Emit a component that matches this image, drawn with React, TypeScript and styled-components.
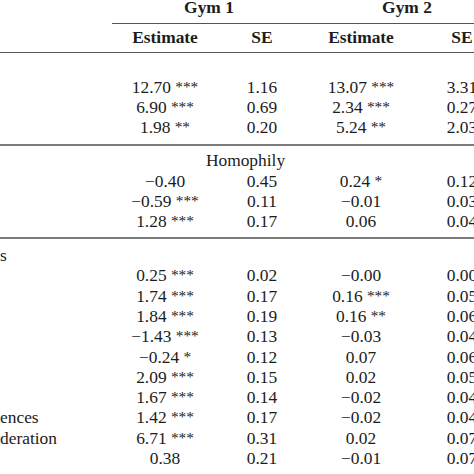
import React from 'react'
import styled, { createGlobalStyle } from 'styled-components'

const GlobalStyle = createGlobalStyle`
  html, body {
    margin: 0;
    padding: 0;
    background: #ffffff;
    overflow: hidden;
  }
  body {
    width: 474px;
    height: 474px;
    font-family: "Liberation Serif", "Times New Roman", serif;
    color: #1c1c1c;
  }
`

const COLUMNS = '112px 106px 88px 110px 92px'
const ROW_H = 20.3

const Table = styled.div`
  width: 508px;
  margin-top: -3px;
  font-size: 17.4px;
  line-height: ${ROW_H}px;
`

const HeadRow = styled.div<{ $top?: number; $bottom?: number; $rule?: boolean }>`
  display: grid;
  grid-template-columns: ${COLUMNS};
  padding-top: ${p => p.$top ?? 0}px;
  padding-bottom: ${p => p.$bottom ?? 0}px;
  border-bottom: ${p => (p.$rule ? '1px solid #555' : 'none')};
  font-weight: bold;
`

const GymCell = styled.div<{ $col: string }>`
  grid-column: ${p => p.$col};
  text-align: center;
  padding-bottom: 5.7px;
  border-bottom: 1px solid #555;
`

const HeadCell = styled.div`
  text-align: center;
`

const Section = styled.div<{ $top: number; $bottom: number; $last?: boolean }>`
  padding-top: ${p => p.$top}px;
  padding-bottom: ${p => p.$bottom}px;
  border-bottom: ${p => (p.$last ? 'none' : '2px solid #7c7c7c')};
`

const Row = styled.div`
  display: grid;
  grid-template-columns: ${COLUMNS};
  height: ${ROW_H}px;
  white-space: nowrap;
`

const Label = styled.div`
  text-align: left;
  overflow: hidden;
`

const Num = styled.div`
  text-align: center;
`

const Stars = styled.span`
  font-size: 0.88em;
  vertical-align: 0.06em;
  margin-left: 0.28em;
`

const SectionTitle = styled.div`
  grid-column: 1 / -1;
  text-align: center;
  padding-right: 17px;
`

type DataRow = { label?: string; e1: string; s1: string; e2: string; s2: string }

const section1: DataRow[] = [
  { e1: '12.70 ***', s1: '1.16', e2: '13.07 ***', s2: '3.31' },
  { e1: '6.90 ***', s1: '0.69', e2: '2.34 ***', s2: '0.27' },
  { e1: '1.98 **', s1: '0.20', e2: '5.24 **', s2: '2.03' },
]

const section2: DataRow[] = [
  { e1: '−0.40', s1: '0.45', e2: '0.24 *', s2: '0.12' },
  { e1: '−0.59 ***', s1: '0.11', e2: '−0.01', s2: '0.03' },
  { e1: '1.28 ***', s1: '0.17', e2: '0.06', s2: '0.04' },
]

const section3: DataRow[] = [
  { e1: '0.25 ***', s1: '0.02', e2: '−0.00', s2: '0.00' },
  { e1: '1.74 ***', s1: '0.17', e2: '0.16 ***', s2: '0.05' },
  { e1: '1.84 ***', s1: '0.19', e2: '0.16 **', s2: '0.06' },
  { e1: '−1.43 ***', s1: '0.13', e2: '−0.03', s2: '0.04' },
  { e1: '−0.24 *', s1: '0.12', e2: '0.07', s2: '0.06' },
  { e1: '2.09 ***', s1: '0.15', e2: '0.02', s2: '0.05' },
  { e1: '1.67 ***', s1: '0.14', e2: '−0.02', s2: '0.04' },
  { label: 'ences', e1: '1.42 ***', s1: '0.17', e2: '−0.02', s2: '0.04' },
  { label: 'deration', e1: '6.71 ***', s1: '0.31', e2: '0.02', s2: '0.07' },
  { e1: '0.38', s1: '0.21', e2: '−0.01', s2: '0.07' },
]

// split "1.42 ***" into value and significance stars
const Estimate: React.FC<{ value: string }> = ({ value }) => {
  const [num, stars] = value.split(' ')
  return (
    <Num>
      {num}
      {stars && <Stars>{stars}</Stars>}
    </Num>
  )
}

const Rows: React.FC<{ rows: DataRow[] }> = ({ rows }) => (
  <>
    {rows.map((r, i) => (
      <Row key={i}>
        <Label>{r.label}</Label>
        <Estimate value={r.e1} />
        <Num>{r.s1}</Num>
        <Estimate value={r.e2} />
        <Num>{r.s2}</Num>
      </Row>
    ))}
  </>
)

export default function App() {
  return (
    <>
      <GlobalStyle />
      <Table>
        <HeadRow>
          <GymCell $col="2 / 4">Gym 1</GymCell>
          <GymCell $col="4 / 6">Gym 2</GymCell>
        </HeadRow>
        <HeadRow $top={2.8} $bottom={4.9} $rule>
          <HeadCell />
          <HeadCell>Estimate</HeadCell>
          <HeadCell>SE</HeadCell>
          <HeadCell>Estimate</HeadCell>
          <HeadCell>SE</HeadCell>
        </HeadRow>

        <Section $top={3.4} $bottom={6.4}>
          <Row />
          <Rows rows={section1} />
        </Section>

        <Section $top={4.5} $bottom={5.3}>
          <Row>
            <SectionTitle>Homophily</SectionTitle>
          </Row>
          <Rows rows={section2} />
        </Section>

        <Section $top={6.1} $bottom={0} $last>
          <Row>
            <Label>s</Label>
          </Row>
          <Rows rows={section3} />
        </Section>
      </Table>
    </>
  )
}
